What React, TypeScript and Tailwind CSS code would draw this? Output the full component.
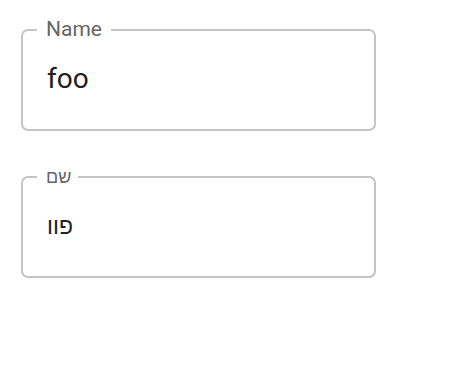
import { useState } from "react";

interface FieldProps {
  label: string;
  initial: string;
  rtlText?: boolean;
}

const FONT = "Roboto, 'Liberation Sans', 'DejaVu Sans', sans-serif";

function OutlinedField({ label, initial, rtlText }: FieldProps) {
  const [value, setValue] = useState(initial);

  return (
    <fieldset className="w-[355px] rounded-[7px] border-2 border-[#c4c4c4] p-0 m-0 min-w-0">
      <legend
        className={
          rtlText
            ? "ml-[14px] pl-[9px] pr-[7px] text-[18px] leading-[21px] text-[#666666]"
            : "ml-[14px] px-[9px] text-[21px] leading-[21px] text-[#666666]"
        }
      >
        {label}
      </legend>
      <div className="px-[24px] pt-[19px] pb-[30px]">
        <input
          value={value}
          onChange={(e) => setValue(e.target.value)}
          className={
            rtlText
              ? "block w-full h-[40px] text-[23px] text-[#212121] bg-transparent outline-none border-0 p-0"
              : "block w-full h-[40px] text-[28px] text-[#212121] bg-transparent outline-none border-0 p-0"
          }
          style={{ fontFamily: FONT }}
        />
      </div>
    </fieldset>
  );
}

export default function App() {
  return (
    <div
      className="min-h-screen w-full bg-white pl-[21px] pt-[19px]"
      style={{ fontFamily: FONT }}
    >
      <OutlinedField label="Name" initial="foo" />
      <div className="mt-[35px]">
        <OutlinedField label="שם" initial="פוו" rtlText />
      </div>
    </div>
  );
}
